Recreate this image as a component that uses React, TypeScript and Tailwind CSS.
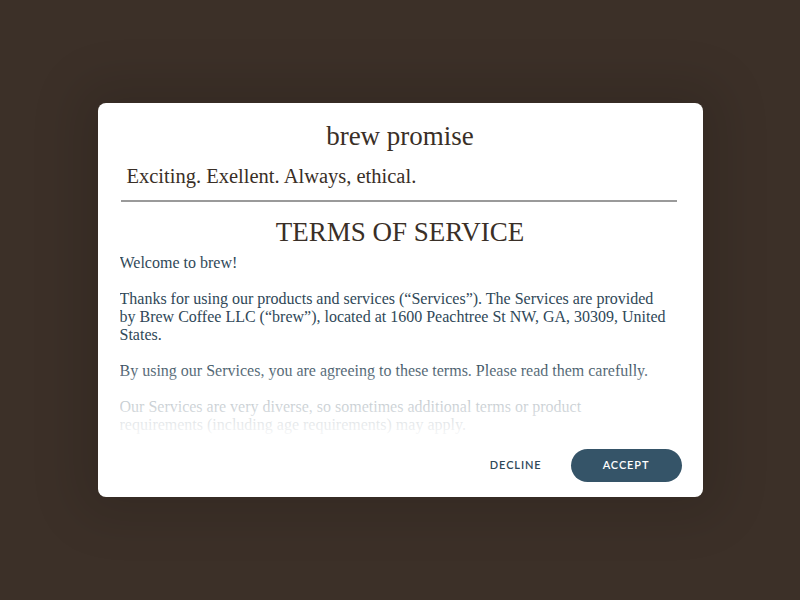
import React from 'react';

const serif = { fontFamily: '"Liberation Serif", "DejaVu Serif", serif' };
const sans = { fontFamily: 'Lato, "Open Sans", sans-serif' };

const paragraphs = [
  'Welcome to brew!',
  'Thanks for using our products and services (\u201cServices\u201d). The Services are provided by Brew Coffee LLC (\u201cbrew\u201d), located at 1600 Peachtree St NW, GA, 30309, United States.',
  'By using our Services, you are agreeing to these terms. Please read them carefully.',
  'Our Services are very diverse, so sometimes additional terms or product requirements (including age requirements) may apply.',
];

export default function App() {
  return (
    <div className="min-h-screen w-full bg-[#3c3028] flex items-center justify-center">
      <div
        className="w-[605px] h-[394px] bg-white rounded-lg shadow-[0_0_50px_20px_rgba(0,0,0,0.12)] flex flex-col px-[22px] pt-[17px]"
        style={serif}
      >
        <h1 className="text-center text-[27px] leading-[32px] text-[#3a2f27]">brew promise</h1>
        <p className="mt-[11px] pl-[7px] text-[20.5px] leading-[26px] text-[#3a2f27]">
          Exciting. Exellent. Always, ethical.
        </p>
        <div className="mt-[11px] ml-[1px] h-[2px] w-[556px] bg-[#9a9a9a]" />
        <h2 className="mt-[16px] text-center text-[27px] leading-[28px] text-[#3a2f27]">TERMS OF SERVICE</h2>
        <div className="relative mt-[8px] h-[180px] overflow-hidden">
          <div className="flex flex-col gap-[18px] text-[16px] leading-[18px] text-[#2f4858] w-[551px]">
            {paragraphs.map((p, i) => (
              <p key={i} className={i === 3 ? 'pr-[20px]' : ''}>
                {p}
              </p>
            ))}
          </div>
          <div className="pointer-events-none absolute inset-x-0 bottom-0 h-[72px] bg-gradient-to-b from-white/0 via-white/70 to-white/95" />
        </div>
        <div className="flex-1 flex items-start justify-end gap-[27px] pt-[15px]">
          <button
            className="h-[33px] px-[2px] text-[11px] font-semibold tracking-[0.08em] text-[#2f4858]"
            style={sans}
          >
            DECLINE
          </button>
          <button
            className="h-[33px] w-[111px] -mr-[1px] rounded-full bg-[#355468] text-[11px] font-semibold tracking-[0.08em] text-white"
            style={sans}
          >
            ACCEPT
          </button>
        </div>
      </div>
    </div>
  );
}
